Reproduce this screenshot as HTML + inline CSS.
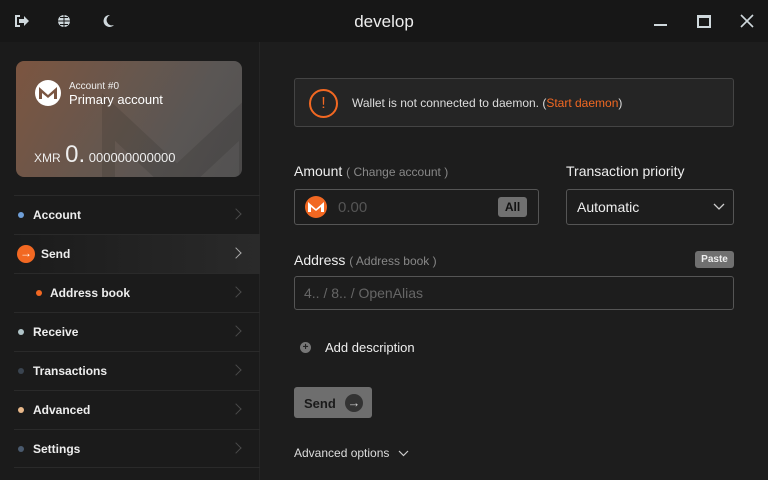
<!DOCTYPE html>
<html><head><meta charset="utf-8"><style>
*{margin:0;padding:0;box-sizing:border-box}
body{width:768px;height:480px;background:#1d1d1d;font-family:"Liberation Sans",sans-serif;color:#fff;position:relative;overflow:hidden}
.title{position:absolute;left:0;top:0;width:768px;height:42px;background:#171717}
.title .t{position:absolute;left:0;width:768px;text-align:center;top:12px;font-size:17px;color:#eee}
.side{position:absolute;left:0;top:42px;width:260px;height:438px;background:#1b1b1b;border-right:1px solid #252525}
.card{position:absolute;left:16px;top:19px;width:226px;height:116px;border-radius:8px;background:linear-gradient(120deg,#7c5540 0%,#66574e 45%,#5a5654 70%,#525151 100%);overflow:hidden}
.row{position:absolute;left:14px;width:246px;height:39px;border-top:1px solid #2a2a2a;font-size:12px;font-weight:bold;color:#eee}
.row span{position:absolute;top:12px}
.dot{position:absolute;left:4px;top:16px;width:6px;height:6px;border-radius:50%}
.chev{position:absolute;right:20px;top:14px;width:8px;height:8px;border-right:1.3px solid #4a4a4a;border-top:1.3px solid #4a4a4a;transform:rotate(45deg)}
.box{position:absolute;border:1px solid #555;border-radius:3px}
.lbl{position:absolute;font-size:14px;color:#eee}
.lbl i{font-style:normal;font-size:12px;color:#888}
</style></head><body>
<div class="title">
<svg style="position:absolute;left:14px;top:14px" width="16" height="14"><path d="M6 2H2v10h4" stroke="#cfd8dc" stroke-width="2" fill="none"/><path d="M5 5h5V2l5 5-5 5V9H5z" fill="#cfd8dc"/></svg>
<svg style="position:absolute;left:57px;top:14px" width="14" height="14"><circle cx="7" cy="7" r="6" fill="#cfd8dc"/><path d="M1 7h12M7 1v12M3 3.5h8M3 10.5h8" stroke="#171717" stroke-width="1"/></svg>
<svg style="position:absolute;left:101px;top:14px" width="14" height="14"><path d="M9 1a6 6 0 1 0 4 10A5 5 0 0 1 9 1z" fill="#cfd8dc"/></svg>
<div class="t">develop</div>
<div style="position:absolute;left:654px;top:24px;width:13px;height:2px;background:#cfd8dc"></div>
<div style="position:absolute;left:697px;top:15px;width:14px;height:13px;border:2px solid #cfd8dc;border-top-width:3px"></div>
<svg style="position:absolute;left:740px;top:14px" width="14" height="14"><path d="M1 1l12 12M13 1L1 13" stroke="#cfd8dc" stroke-width="1.6"/></svg>
</div>
<div class="side">
<div class="card">
<svg style="position:absolute;right:-10px;top:30px" width="150" height="100"><path d="M0 100V20l75 70 75-70v80" stroke="#000" stroke-opacity=".1" stroke-width="26" fill="none"/></svg>
<svg style="position:absolute;left:19px;top:19px" width="26" height="26"><circle cx="13" cy="13" r="13" fill="#fff"/><path d="M4 19V7l9 8 9-8v12h-3v-6l-6 5-6-5v6z" fill="#7a5541"/></svg>
<div style="position:absolute;left:53px;top:20px;font-size:10px;color:#eee">Account #0</div>
<div style="position:absolute;left:53px;top:31px;font-size:13px;color:#fff">Primary account</div>
<div style="position:absolute;left:18px;top:80px;color:#eee"><span style="font-size:12px">XMR</span> <span style="font-size:24px;font-weight:300">0.</span><span style="font-size:13px"> 000000000000</span></div>
</div>
<div class="row" style="top:153px"><div class="dot" style="background:#6f9fd8"></div><span style="left:19px">Account</span><div class="chev"></div></div>
<div class="row" style="top:192px;background:linear-gradient(90deg,#1b1b1b,#2a2a2a)"><div style="position:absolute;left:3px;top:10px;width:18px;height:18px;border-radius:50%;background:#f26822;color:#fff;font-size:12px;text-align:center;line-height:17px">→</div><span style="left:27px">Send</span><div class="chev" style="border-color:#aaa"></div></div>
<div class="row" style="top:231px"><div class="dot" style="left:22px;background:#f26822"></div><span style="left:36px">Address book</span><div class="chev"></div></div>
<div class="row" style="top:270px"><div class="dot" style="background:#b0c4c8"></div><span style="left:19px">Receive</span><div class="chev"></div></div>
<div class="row" style="top:309px"><div class="dot" style="background:#3a4450"></div><span style="left:19px">Transactions</span><div class="chev"></div></div>
<div class="row" style="top:348px"><div class="dot" style="background:#e8b88a"></div><span style="left:19px">Advanced</span><div class="chev"></div></div>
<div class="row" style="top:387px;border-bottom:1px solid #2a2a2a"><div class="dot" style="background:#4a5a6e"></div><span style="left:19px">Settings</span><div class="chev"></div></div>
</div>
<div class="box" style="left:294px;top:78px;width:440px;height:49px;background:#252525;border-color:#444"></div>
<div style="position:absolute;left:309px;top:89px;width:29px;height:29px;border:2px solid #f26822;border-radius:50%;color:#f26822;text-align:center;font-size:16px;line-height:25px">!</div>
<div style="position:absolute;left:352px;top:96px;font-size:12px;color:#ddd">Wallet is not connected to daemon. (<span style="color:#f26822">Start daemon</span>)</div>
<div class="lbl" style="left:294px;top:163px">Amount <i>( Change account )</i></div>
<div class="lbl" style="left:566px;top:163px">Transaction priority</div>
<div class="box" style="left:294px;top:189px;width:245px;height:36px"></div>
<svg style="position:absolute;left:305px;top:196px" width="22" height="22"><circle cx="11" cy="11" r="11" fill="#f26822"/><path d="M3 16V6l8 7 8-7v10h-3v-5l-5 4-5-4v5z" fill="#fff"/></svg>
<div style="position:absolute;left:338px;top:199px;font-size:15px;color:#555">0.00</div>
<div style="position:absolute;left:498px;top:197px;width:29px;height:20px;background:#707070;border-radius:3px;font-size:12px;font-weight:bold;color:#111;text-align:center;line-height:20px">All</div>
<div class="box" style="left:566px;top:189px;width:168px;height:36px"></div>
<div style="position:absolute;left:577px;top:199px;font-size:14px;color:#eee">Automatic</div>
<svg style="position:absolute;left:713px;top:203px" width="12" height="8"><path d="M1 1l5 5 5-5" stroke="#ccc" stroke-width="1.3" fill="none"/></svg>
<div class="lbl" style="left:294px;top:252px">Address <i>( Address book )</i></div>
<div style="position:absolute;left:695px;top:251px;width:39px;height:17px;background:#707070;border-radius:3px;font-size:10px;font-weight:bold;color:#eee;text-align:center;line-height:17px">Paste</div>
<div class="box" style="left:294px;top:276px;width:440px;height:34px"></div>
<div style="position:absolute;left:304px;top:285px;font-size:14px;color:#666">4.. / 8.. / OpenAlias</div>
<div style="position:absolute;left:300px;top:342px;width:11px;height:11px;border-radius:50%;background:#777;color:#222;font-size:10px;font-weight:bold;text-align:center;line-height:11px">+</div>
<div style="position:absolute;left:325px;top:340px;font-size:13px;color:#eee">Add description</div>
<div style="position:absolute;left:294px;top:387px;width:78px;height:31px;background:#6e6e6e;border-radius:3px"></div>
<div style="position:absolute;left:304px;top:396px;font-size:13px;font-weight:bold;color:#1a1a1a">Send</div>
<div style="position:absolute;left:345px;top:394px;width:18px;height:18px;border-radius:50%;background:#333;color:#ccc;font-size:13px;text-align:center;line-height:17px">→</div>
<div style="position:absolute;left:294px;top:446px;font-size:12px;color:#ddd">Advanced options</div>
<svg style="position:absolute;left:398px;top:450px" width="11" height="7"><path d="M1 1l4.5 4.5L10 1" stroke="#ccc" stroke-width="1.2" fill="none"/></svg>
</body></html>
